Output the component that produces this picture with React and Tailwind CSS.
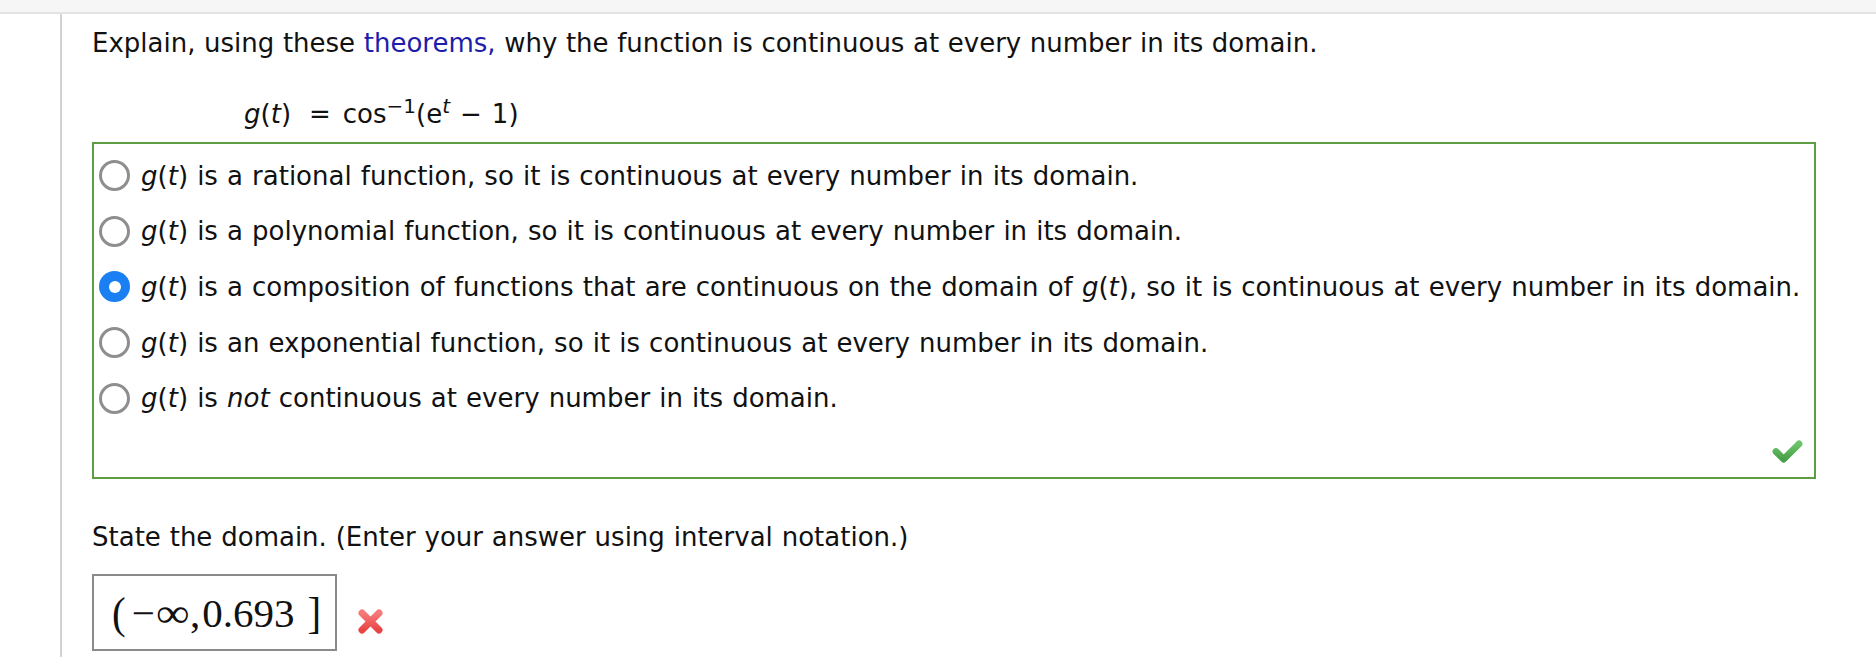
import React from "react";

const G = () => (
  <>
    <i>g</i>(<i>t</i>)
  </>
);

function Radio({ checked }) {
  if (checked) {
    return (
      <div className="w-[31px] h-[31px] rounded-full bg-[#1a7ff2] flex items-center justify-center shrink-0">
        <div className="w-[12px] h-[12px] rounded-full bg-white" />
      </div>
    );
  }
  return <div className="w-[31px] h-[31px] rounded-full border-[3px] border-[#8e8e8e] bg-white shrink-0" />;
}

function Row({ checked, children }) {
  return (
    <div className="flex items-center h-[55.6px]">
      <Radio checked={checked} />
      <div className="ml-[11px] whitespace-nowrap [word-spacing:0.85px]">{children}</div>
    </div>
  );
}

export default function App() {
  return (
    <div
      className="w-[1876px] h-[657px] bg-white overflow-hidden text-[26px] leading-[30px] text-[#111]"
      style={{ fontFamily: '"DejaVu Sans", Verdana, sans-serif' }}
    >
      <div className="h-[14px] bg-[#f6f6f6] border-b-2 border-[#e3e3e3]" />
      <div className="flex h-[643px]">
        <div className="w-[60px] shrink-0" />
        <div className="border-l-2 border-[#d2d2d2] pl-[30px] flex-1">
          <div className="pt-[14px] whitespace-nowrap [word-spacing:0.35px]">
            Explain, using these <span className="text-[#1d1daa]">theorems,</span> why the function is continuous at
            every number in its domain.
          </div>
          <div className="mt-[41px] pl-[152px] whitespace-nowrap">
            <G />
            <span className="ml-[18px] mr-[12px]">=</span>cos<sup className="text-[20px]">−1</sup>(e
            <sup className="text-[20px]">
              <i>t</i>
            </sup>
            <span className="mx-[10px]">−</span>1)
          </div>
          <div className="mt-[13px] w-[1724px] h-[337px] border-2 border-[#5d9e44] pt-[4px] pl-[5px]">
            <Row>
              <G /> is a rational function, so it is continuous at every number in its domain.
            </Row>
            <Row>
              <G /> is a polynomial function, so it is continuous at every number in its domain.
            </Row>
            <Row checked>
              <G /> is a composition of functions that are continuous on the domain of <G />, so it is continuous at
              every number in its domain.
            </Row>
            <Row>
              <G /> is an exponential function, so it is continuous at every number in its domain.
            </Row>
            <Row>
              <G /> is <i>not</i> continuous at every number in its domain.
            </Row>
            <div className="flex justify-end pr-[11px] mt-[13px]">
              <svg width="31" height="25" viewBox="0 0 32 26">
                <defs>
                  <linearGradient id="gc" x1="0" y1="0" x2="0" y2="1">
                    <stop offset="0" stopColor="#6cc46a" />
                    <stop offset="1" stopColor="#4aa048" />
                  </linearGradient>
                </defs>
                <path
                  d="M4 13 L12 21 L28 5"
                  fill="none"
                  stroke="url(#gc)"
                  strokeWidth="7"
                  strokeLinecap="round"
                  strokeLinejoin="round"
                />
              </svg>
            </div>
          </div>
          <div className="mt-[43px] whitespace-nowrap [word-spacing:0.6px]">
            State the domain. (Enter your answer using interval notation.)
          </div>
          <div className="mt-[22px] flex items-start">
            <div
              className="w-[245px] h-[77px] border-2 border-[#8a8a8a] flex items-center pl-[18px] text-[41px] leading-[44px] whitespace-nowrap"
              style={{ fontFamily: '"Liberation Serif", "DejaVu Serif", serif' }}
            >
              <span className="inline-block scale-y-[1.1]">(</span>
              <span className="ml-[6px]">−</span>
              <span className="ml-[1px] inline-block scale-x-[1.15] origin-left">∞</span>
              <span className="ml-[5px]">,</span>
              <span className="ml-[2px]">0.693</span>
              <span className="ml-[13px] inline-block scale-y-[1.1]">]</span>
            </div>
            <svg className="ml-[20px] mt-[34px]" width="27" height="27" viewBox="0 0 27 27">
              <defs>
                <linearGradient id="rx" x1="0" y1="0" x2="0" y2="1">
                  <stop offset="0" stopColor="#f77a7a" />
                  <stop offset="1" stopColor="#e84545" />
                </linearGradient>
              </defs>
              <path
                d="M5 5 L22 22 M22 5 L5 22"
                fill="none"
                stroke="url(#rx)"
                strokeWidth="7"
                strokeLinecap="round"
              />
            </svg>
          </div>
        </div>
      </div>
    </div>
  );
}
